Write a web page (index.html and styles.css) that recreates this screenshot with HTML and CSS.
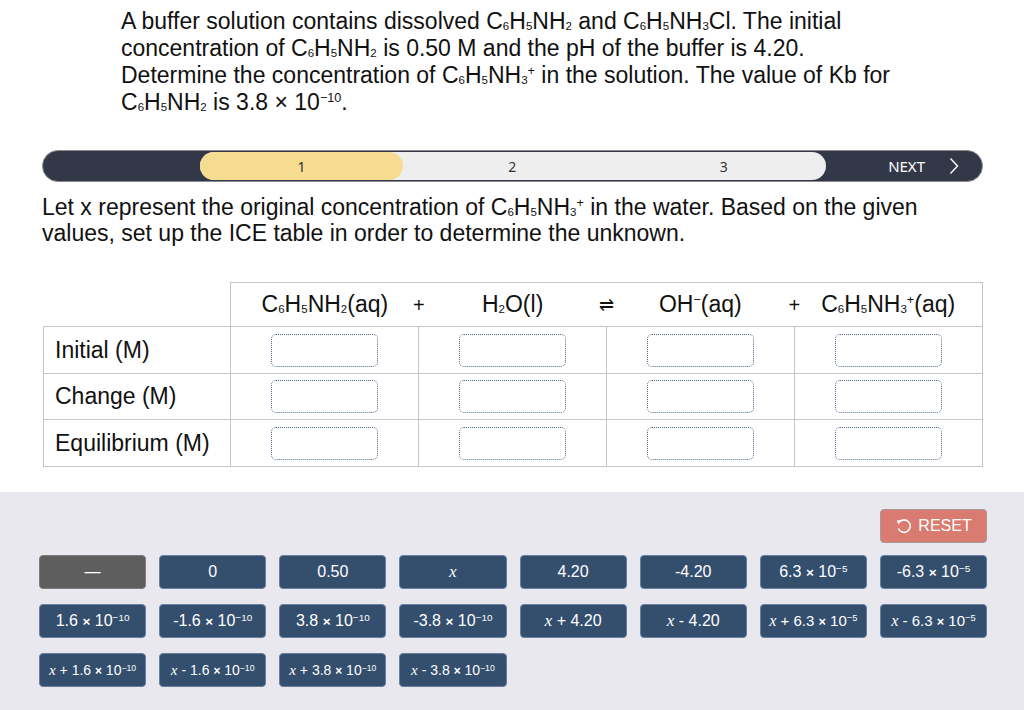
FILE: index.html
```html
<!DOCTYPE html>
<html>
<head>
<meta charset="utf-8">
<link rel="stylesheet" href="styles.css">
</head>
<body>
<div class="question">
A buffer solution contains dissolved C<sub>6</sub>H<sub>5</sub>NH<sub>2</sub> and C<sub>6</sub>H<sub>5</sub>NH<sub>3</sub>Cl. The initial<br>
concentration of C<sub>6</sub>H<sub>5</sub>NH<sub>2</sub> is 0.50 M and the pH of the buffer is 4.20.<br>
Determine the concentration of C<sub>6</sub>H<sub>5</sub>NH<sub>3</sub><sup>+</sup> in the solution. The value of Kb for<br>
C<sub>6</sub>H<sub>5</sub>NH<sub>2</sub> is 3.8 × 10<sup>−10</sup>.
</div>

<div class="progress">
  <div class="track">
    <div class="step step-active">1</div>
    <div class="step">2</div>
    <div class="step">3</div>
  </div>
  <div class="next">NEXT <span class="chev"><svg width="10" height="18" viewBox="0 0 10 18"><path d="M1.5 1.5 L8.5 9 L1.5 16.5" fill="none" stroke="#fff" stroke-width="1.4"/></svg></span></div>
</div>

<div class="instruction">
Let x represent the original concentration of C<sub>6</sub>H<sub>5</sub>NH<sub>3</sub><sup>+</sup> in the water. Based on the given<br>
values, set up the ICE table in order to determine the unknown.
</div>

<div class="ice">
  <div class="corner"></div>
  <div class="header">
    <div class="hcell"><span>C<sub>6</sub>H<sub>5</sub>NH<sub>2</sub>(aq)</span><span class="op">+</span></div>
    <div class="hcell"><span>H<sub>2</sub>O(l)</span><span class="op eq">⇌</span></div>
    <div class="hcell"><span>OH<sup>−</sup>(aq)</span><span class="op">+</span></div>
    <div class="hcell"><span>C<sub>6</sub>H<sub>5</sub>NH<sub>3</sub><sup>+</sup>(aq)</span></div>
  </div>

  <div class="label">Initial (M)</div>
  <div class="cell"><div class="box"></div></div>
  <div class="cell"><div class="box"></div></div>
  <div class="cell"><div class="box"></div></div>
  <div class="cell"><div class="box"></div></div>

  <div class="label">Change (M)</div>
  <div class="cell"><div class="box"></div></div>
  <div class="cell"><div class="box"></div></div>
  <div class="cell"><div class="box"></div></div>
  <div class="cell"><div class="box"></div></div>

  <div class="label">Equilibrium (M)</div>
  <div class="cell"><div class="box"></div></div>
  <div class="cell"><div class="box"></div></div>
  <div class="cell"><div class="box"></div></div>
  <div class="cell"><div class="box"></div></div>
</div>

<div class="panel">
  <div class="reset-row">
    <div class="reset"><svg width="18" height="18" viewBox="0 0 18 18"><path d="M4.2 5.2 A6.2 6.2 0 1 1 3.3 11.5" fill="none" stroke="#fff" stroke-width="1.6"/><path d="M1.8 3.2 L6.6 3.6 L3.4 7.4 Z" fill="#fff"/></svg><span>RESET</span></div>
  </div>
  <div class="tiles">
    <div class="tile tile-dash"><span>—</span></div>
    <div class="tile"><span>0</span></div>
    <div class="tile"><span>0.50</span></div>
    <div class="tile"><span><i class="x">x</i></span></div>
    <div class="tile"><span>4.20</span></div>
    <div class="tile"><span>-4.20</span></div>
    <div class="tile"><span>6.3 <b class="t">×</b> 10<sup>−5</sup></span></div>
    <div class="tile"><span>-6.3 <b class="t">×</b> 10<sup>−5</sup></span></div>

    <div class="tile"><span>1.6 <b class="t">×</b> 10<sup>−10</sup></span></div>
    <div class="tile"><span>-1.6 <b class="t">×</b> 10<sup>−10</sup></span></div>
    <div class="tile"><span>3.8 <b class="t">×</b> 10<sup>−10</sup></span></div>
    <div class="tile"><span>-3.8 <b class="t">×</b> 10<sup>−10</sup></span></div>
    <div class="tile"><span><i class="x">x</i> + 4.20</span></div>
    <div class="tile"><span><i class="x">x</i> - 4.20</span></div>
    <div class="tile tile-md"><span><i class="x">x</i> + 6.3 <b class="t">×</b> 10<sup>−5</sup></span></div>
    <div class="tile tile-md"><span><i class="x">x</i> - 6.3 <b class="t">×</b> 10<sup>−5</sup></span></div>

    <div class="tile tile-sm"><span><i class="x">x</i> + 1.6 <b class="t">×</b> 10<sup>−10</sup></span></div>
    <div class="tile tile-sm"><span><i class="x">x</i> - 1.6 <b class="t">×</b> 10<sup>−10</sup></span></div>
    <div class="tile tile-sm"><span><i class="x">x</i> + 3.8 <b class="t">×</b> 10<sup>−10</sup></span></div>
    <div class="tile tile-sm"><span><i class="x">x</i> - 3.8 <b class="t">×</b> 10<sup>−10</sup></span></div>
  </div>
</div>
</body>
</html>
```

FILE: styles.css
```css
* { box-sizing: border-box; }
html, body { margin: 0; padding: 0; }
body {
  width: 1024px;
  height: 710px;
  overflow: hidden;
  background: #fff;
  font-family: "Liberation Sans", Arial, sans-serif;
  color: #111;
}
sub, sup { line-height: 0; }
.question sub, .instruction sub, .header sub {
  font-size: 0.5em;
  vertical-align: -0.12em;
}
.question sup, .instruction sup, .header sup {
  font-size: 0.55em;
  vertical-align: 0.6em;
}
.question {
  padding: 8px 0 0 121px;
  font-size: 23px;
  line-height: 27px;
  height: 150px;
}
.progress {
  margin-left: 42px;
  width: 941px;
  height: 32px;
  background: #333849;
  border: 1px solid #8a8a8a;
  border-radius: 16px;
  display: flex;
  align-items: center;
  padding-left: 157px;
}
.track {
  width: 626px;
  height: 28px;
  border-radius: 14px;
  background: #eeeeee;
  display: flex;
  font-family: "Noto Sans", "Open Sans", sans-serif;
  font-size: 14px;
  color: #333;
}
.step {
  flex: 0 0 203px;
  display: flex;
  align-items: center;
  justify-content: center;
}
.step + .step { flex: 1 1 0; padding-left: 7px; }
.step-active {
  background: #f5dc90;
  border-radius: 14px;
}
.next {
  flex: 1;
  display: flex;
  align-items: center;
  justify-content: flex-end;
  padding-right: 23px;
  color: #fff;
  font-family: "Noto Sans", "Open Sans", sans-serif;
  font-size: 15px;
  gap: 24px;
}
.chev { display: flex; }
.instruction {
  padding: 12px 0 0 42px;
  font-size: 23px;
  line-height: 26px;
  height: 100px;
}
.ice {
  margin-left: 43px;
  width: 940px;
  display: grid;
  grid-template-columns: 188px 188px 188px 188px 188px;
  grid-template-rows: 45px 47px 46px 47px;
  font-size: 23px;
}
.corner { border-right: 1px solid #c6c6c6; border-bottom: 1px solid #c6c6c6; }
.header {
  grid-column: 2 / 6;
  display: grid;
  grid-template-columns: repeat(4, 1fr);
  border-top: 1px solid #c6c6c6;
  border-right: 1px solid #c6c6c6;
  border-bottom: 1px solid #c6c6c6;
}
.hcell {
  position: relative;
  display: flex;
  align-items: center;
  justify-content: center;
}
.op {
  position: absolute;
  right: 0;
  top: 50%;
  transform: translate(50%, -50%);
  line-height: 1;
  font-size: 20px;
}
.eq { font-size: 18px; }
.label {
  display: flex;
  align-items: center;
  padding-left: 11px;
  border-left: 1px solid #c6c6c6;
  border-right: 1px solid #c6c6c6;
  border-bottom: 1px solid #c6c6c6;
}
.cell {
  display: flex;
  align-items: center;
  justify-content: center;
  border-right: 1px solid #c6c6c6;
  border-bottom: 1px solid #c6c6c6;
}
.box {
  width: 107px;
  height: 33px;
  border: 1px dotted #4f6688;
  border-radius: 5px;
}
.panel {
  margin-top: 25px;
  background: #e9e8ee;
  height: 220px;
  padding: 17px 37px 0 39px;
}
.reset-row { display: flex; justify-content: flex-end; }
.reset {
  width: 107px;
  height: 34px;
  background: #d97b70;
  border: 1px solid #a09a9a;
  border-radius: 4px;
  color: #fff;
  font-size: 16px;
  display: flex;
  align-items: center;
  justify-content: center;
  gap: 5px;
}
.tiles {
  margin-top: 12px;
  display: grid;
  grid-template-columns: repeat(8, 1fr);
  column-gap: 13px;
  row-gap: 15px;
}
.tile {
  height: 34px;
  background: #344e6e;
  border: 1px solid #6a7f9c;
  border-radius: 4px;
  color: #fff;
  font-size: 16px;
  display: flex;
  align-items: center;
  justify-content: center;
  white-space: nowrap;
}
.tile sup { font-size: 0.62em; vertical-align: 0.5em; margin-left: 0; }
.tile .t { font-weight: bold; font-size: 0.85em; }
.tile-md { font-size: 15px; }
.tile-sm { font-size: 14px; }
.tile-dash { background: #5e5e5e; border-color: #7c7c7c; }
.x { font-family: "Liberation Serif", serif; font-style: italic; font-size: 1.08em; font-weight: normal; }
```
